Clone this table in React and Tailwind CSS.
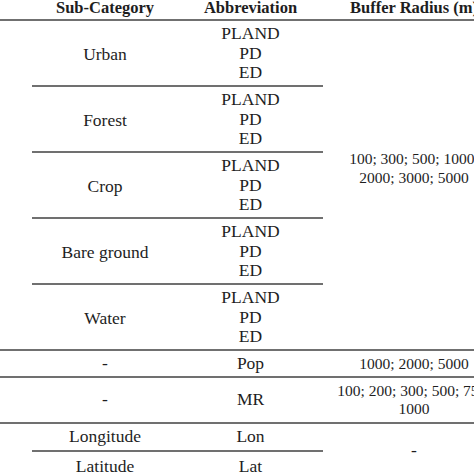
import clsx from 'clsx';

const groups = ['Urban', 'Forest', 'Crop', 'Bare ground', 'Water'];
const metrics = ['PLAND', 'PD', 'ED'];

function Cell({ className, children }) {
  return <div className={clsx('flex items-center justify-center text-center whitespace-nowrap', className)}>{children}</div>;
}

export default function App() {
  return (
    <div className="w-[474px] h-[474px] overflow-hidden bg-white text-[#1e1e1e] font-['Liberation_Serif',serif]">
      <div className="w-[505px]">
        {/* header */}
        <div className="-mt-[2px] h-[23px] flex border-b-2 border-[#707070] font-bold text-[16.5px] leading-[19px]">
          <div className="w-[32px]" />
          <div className="w-[146px] text-center">Sub-Category</div>
          <div className="w-[145px] text-center">Abbreviation</div>
          <div className="w-[182px] text-center whitespace-nowrap">Buffer Radius (m)</div>
        </div>

        {/* land cover groups */}
        <div className="flex border-b-2 border-[#707070]">
          <div className="w-[32px]" />
          <div className="w-[291px] flex flex-col">
            {groups.map((g, i) => (
              <div
                key={g}
                className={clsx('flex pt-[3px] text-[17.5px] leading-[19.5px]', i < 4 ? 'h-[66px] border-b-2 border-[#707070]' : 'h-[64px]')}
              >
                <Cell className="w-[146px]">{g}</Cell>
                <div className="w-[145px] flex flex-col items-center">
                  {metrics.map(m => <div key={m}>{m}</div>)}
                </div>
              </div>
            ))}
          </div>
          <div className="w-[182px] pt-[129px] text-center text-[15.5px] leading-[18.5px] whitespace-nowrap">
            <div>100; 300; 500; 1000;</div>
            <div>2000; 3000; 5000</div>
          </div>
        </div>

        {/* population */}
        <div className="flex h-[27px] border-b-2 border-[#707070] text-[17.5px] leading-[19.6px]">
          <div className="w-[32px]" />
          <Cell className="w-[146px]">-</Cell>
          <Cell className="w-[145px]">Pop</Cell>
          <Cell className="w-[182px] text-[15.5px]">1000; 2000; 5000</Cell>
        </div>

        {/* main roads */}
        <div className="flex h-[46px] border-b-2 border-[#707070] text-[17.5px] leading-[19.6px]">
          <div className="w-[32px]" />
          <Cell className="w-[146px]">-</Cell>
          <Cell className="w-[145px]">MR</Cell>
          <div className="w-[182px] flex flex-col justify-center items-center text-[15.5px] leading-[18.5px] whitespace-nowrap">
            <div>100; 200; 300; 500; 750;</div>
            <div>1000</div>
          </div>
        </div>

        {/* coordinates */}
        <div className="flex text-[17.5px] leading-[19.6px]">
          <div className="w-[32px]" />
          <div className="w-[291px] flex flex-col">
            <div className="flex h-[28px] border-b-2 border-[#707070]">
              <Cell className="w-[146px]">Longitude</Cell>
              <Cell className="w-[145px]">Lon</Cell>
            </div>
            <div className="flex h-[30px]">
              <Cell className="w-[146px]">Latitude</Cell>
              <Cell className="w-[145px]">Lat</Cell>
            </div>
          </div>
          <Cell className="w-[182px] pb-[4px]">-</Cell>
        </div>
      </div>
    </div>
  );
}
